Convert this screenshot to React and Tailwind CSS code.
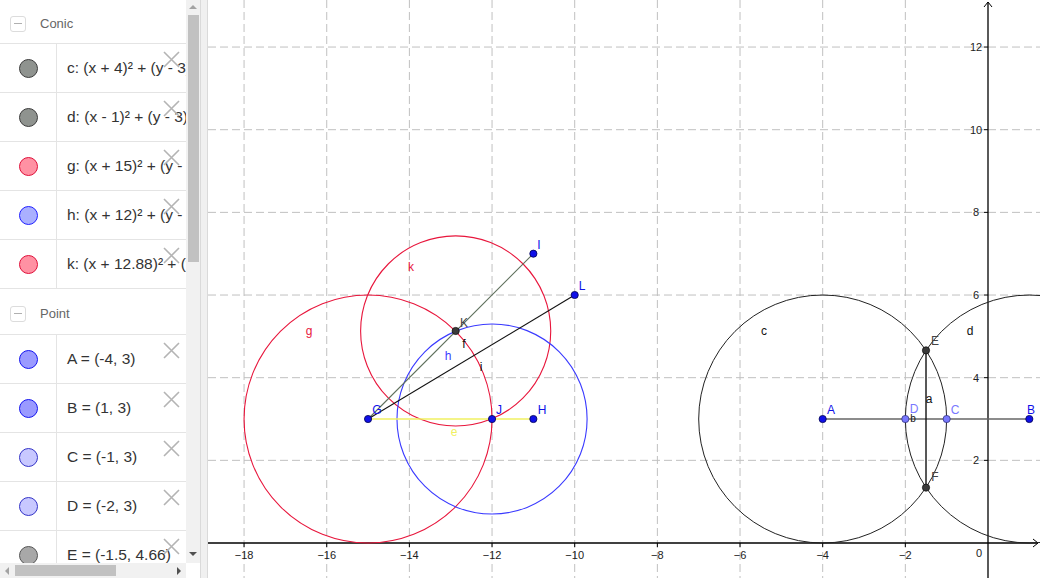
import React from "react";

const S = 41.33;
const OX = 988;
const OY = 543;
const px = (x) => OX + x * S;
const py = (y) => OY - y * S;

const RED = "#e8163c";
const BLUE = "#3a3aff";
const PT_BLUE = "#1010e8";
const PT_LIGHT = "#7878ff";
const PT_DARK = "#3a3a3a";

const conics = [
  { id: "c", text: "c: (x + 4)² + (y - 3)² = 9", fill: "#8f938f", ring: "#3c3c3c" },
  { id: "d", text: "d: (x - 1)² + (y - 3)² = 9", fill: "#8f938f", ring: "#3c3c3c" },
  { id: "g", text: "g: (x + 15)² + (y - 3)² = 9", fill: "#ff91a3", ring: "#e0103a" },
  { id: "h", text: "h: (x + 12)² + (y - 3)² = 5.29", fill: "#aab0ff", ring: "#2020ff" },
  { id: "k", text: "k: (x + 12.88)² + (y - 5.13)² = 5.29", fill: "#ff91a3", ring: "#e0103a" },
];

const points = [
  { id: "A", text: "A = (-4, 3)", fill: "#9a9aff", ring: "#1414f0" },
  { id: "B", text: "B = (1, 3)", fill: "#9a9aff", ring: "#1414f0" },
  { id: "C", text: "C = (-1, 3)", fill: "#c8c8ff", ring: "#3434c8" },
  { id: "D", text: "D = (-2, 3)", fill: "#c8c8ff", ring: "#3434c8" },
  { id: "E", text: "E = (-1.5, 4.66)", fill: "#a8a8a8", ring: "#555555" },
];

function Header({ title, tall }) {
  return (
    <div className={`flex items-center gap-[14px] border-b border-[#e4e4e4] pl-[10px] pt-[4px] ${tall ? "h-[46px]" : "h-[44px]"}`}>
      <div className="flex h-[16px] w-[16px] items-center justify-center rounded-[3px] border border-[#dcdcdc] bg-white">
        <div className="h-[1.5px] w-[8px] bg-[#b0b0b0]" />
      </div>
      <span className="text-[13px] text-[#666]">{title}</span>
    </div>
  );
}

function CloseX() {
  return (
    <svg className="absolute left-[163px] top-[7px]" width="17" height="17" viewBox="0 0 17 17">
      <path d="M1 1 L16 16 M16 1 L1 16" stroke="#b4b4b4" strokeWidth="1.6" />
    </svg>
  );
}

function Row({ item }) {
  return (
    <div className="relative flex h-[49px] border-b border-[#e4e4e4]">
      <div className="flex w-[57px] shrink-0 items-center justify-center border-r border-[#e4e4e4]">
        <div
          className="h-[19px] w-[19px] rounded-full border"
          style={{ backgroundColor: item.fill, borderColor: item.ring }}
        />
      </div>
      <div className="flex items-center overflow-hidden whitespace-nowrap pl-[10px] text-[15.5px] text-[#333]">
        {item.text}
      </div>
      <CloseX />
    </div>
  );
}

function AlgebraPanel() {
  return (
    <div className="flex h-full w-[200px] shrink-0 flex-col bg-white">
      <div className="flex min-h-0 flex-1">
        <div className="w-[186px] overflow-hidden">
          <Header title="Conic" />
          {conics.map((c) => (
            <Row key={c.id} item={c} />
          ))}
          <Header title="Point" tall />
          {points.map((p) => (
            <Row key={p.id} item={p} />
          ))}
        </div>
        <div className="flex w-[14px] flex-col items-center bg-[#f1f1f1]">
          <div className="mt-[5px] h-0 w-0 border-x-[4px] border-b-[4px] border-x-transparent border-b-[#a3a3a3]" />
          <div className="mt-[6px] h-[247px] w-[11px] bg-[#c1c1c1]" />
          <div className="flex-1" />
          <div className="mb-[7px] h-0 w-0 border-x-[4px] border-t-[4px] border-x-transparent border-t-[#505050]" />
        </div>
      </div>
      <div className="flex h-[15px] items-center">
        <div className="flex h-full w-[186px] items-center bg-[#f1f1f1]">
          <div className="ml-[5px] h-0 w-0 border-y-[4px] border-r-[4px] border-y-transparent border-r-[#a3a3a3]" />
          <div className="ml-[6px] h-[11px] w-[101px] bg-[#c1c1c1]" />
          <div className="flex-1" />
          <div className="mr-[5px] h-0 w-0 border-y-[4px] border-l-[4px] border-y-transparent border-l-[#505050]" />
        </div>
        <div className="h-full flex-1 bg-white" />
      </div>
    </div>
  );
}

function Pt({ x, y, fill, stroke = "#000050" }) {
  return <circle cx={px(x)} cy={py(y)} r="3.6" fill={fill} stroke={stroke} strokeWidth="0.8" />;
}

function Label({ x, y, color = "#111", children, size = 12 }) {
  return (
    <text x={x} y={y} fill={color} fontSize={size} textAnchor="middle" dominantBaseline="central">
      {children}
    </text>
  );
}

function Graphics() {
  const gridX = [-20, -18, -16, -14, -12, -10, -8, -6, -4, -2, 2];
  const gridY = [2, 4, 6, 8, 10, 12, 14];
  const xLabels = [-18, -16, -14, -12, -10, -8, -6, -4, -2];
  const yLabels = [2, 4, 6, 8, 10, 12];

  return (
    <div className="h-full flex-1 overflow-hidden bg-white">
      <svg width="832" height="578" viewBox="208 0 832 578" style={{ fontFamily: '"Liberation Sans", Arial, sans-serif' }}>
        {gridX.map((v) => (
          <line key={`gx${v}`} x1={px(v)} y1="0" x2={px(v)} y2="578" stroke="#c0c0c0" strokeDasharray="8 4" />
        ))}
        {gridY.map((v) => (
          <line key={`gy${v}`} x1="208" y1={py(v)} x2="1040" y2={py(v)} stroke="#c0c0c0" strokeDasharray="8 4" />
        ))}

        {/* axes */}
        <line x1="208" y1={OY} x2="1038" y2={OY} stroke="#000" strokeWidth="1.3" />
        <path d={`M1033 ${OY - 4} L1038 ${OY} L1033 ${OY + 4}`} fill="none" stroke="#000" strokeWidth="1" />
        <line x1={OX} y1="2" x2={OX} y2="578" stroke="#000" strokeWidth="1.3" />
        <path d={`M${OX - 4} 7 L${OX} 2 L${OX + 4} 7`} fill="none" stroke="#000" strokeWidth="1" />

        {xLabels.map((v) => (
          <g key={`xl${v}`}>
            <line x1={px(v)} y1={OY} x2={px(v)} y2={OY + 4} stroke="#000" />
            <Label x={px(v)} y={555} color="#222" size={11}>
              {`\u2212${Math.abs(v)}`}
            </Label>
          </g>
        ))}
        <Label x={979} y={553} color="#222" size={11}>0</Label>
        {yLabels.map((v) => (
          <g key={`yl${v}`}>
            <line x1={OX - 4} y1={py(v)} x2={OX} y2={py(v)} stroke="#000" />
            <Label x={976} y={py(v)} color="#222" size={11}>
              {v}
            </Label>
          </g>
        ))}

        {/* left construction */}
        <circle cx={px(-15)} cy={py(3)} r={3 * S} fill="none" stroke={RED} strokeWidth="1.1" />
        <circle cx={px(-12.88)} cy={py(5.13)} r={2.3 * S} fill="none" stroke={RED} strokeWidth="1.1" />
        <circle cx={px(-12)} cy={py(3)} r={2.3 * S} fill="none" stroke={BLUE} strokeWidth="1.1" />
        <line x1={px(-15)} y1={py(3)} x2={px(-11)} y2={py(3)} stroke="#f0f060" strokeWidth="1.3" />
        <line x1={px(-15)} y1={py(3)} x2={px(-11)} y2={py(7)} stroke="#5f705c" strokeWidth="1.1" />
        <line x1={px(-15)} y1={py(3)} x2={px(-10)} y2={py(6)} stroke="#111" strokeWidth="1.1" />

        <Pt x={-15} y={3} fill={PT_BLUE} />
        <Pt x={-12} y={3} fill={PT_BLUE} />
        <Pt x={-11} y={3} fill={PT_BLUE} />
        <Pt x={-11} y={7} fill={PT_BLUE} />
        <Pt x={-10} y={6} fill={PT_BLUE} />
        <Pt x={-12.88} y={5.13} fill={PT_DARK} stroke="#111" />

        <Label x={539} y={245} color={PT_BLUE}>I</Label>
        <Label x={582} y={286} color={PT_BLUE}>L</Label>
        <Label x={464} y={323} color="#444">K</Label>
        <Label x={464} y={344}>f</Label>
        <Label x={448} y={356} color={BLUE}>h</Label>
        <Label x={481} y={367}>i</Label>
        <Label x={377} y={410} color={PT_BLUE}>G</Label>
        <Label x={499} y={410} color={PT_BLUE}>J</Label>
        <Label x={542} y={410} color={PT_BLUE}>H</Label>
        <Label x={454} y={432} color="#f0f060">e</Label>
        <Label x={411} y={267} color={RED}>k</Label>
        <Label x={309} y={331} color={RED}>g</Label>

        {/* right construction */}
        <circle cx={px(-4)} cy={py(3)} r={3 * S} fill="none" stroke="#222" strokeWidth="1" />
        <circle cx={px(1)} cy={py(3)} r={3 * S} fill="none" stroke="#222" strokeWidth="1" />
        <line x1={px(-4)} y1={py(3)} x2={px(1)} y2={py(3)} stroke="#666" strokeWidth="1.6" />
        <line x1={px(-1.5)} y1={py(4.66)} x2={px(-1.5)} y2={py(1.34)} stroke="#111" strokeWidth="1.4" />

        <Pt x={-4} y={3} fill={PT_BLUE} />
        <Pt x={1} y={3} fill={PT_BLUE} />
        <Pt x={-1} y={3} fill={PT_LIGHT} stroke="#333380" />
        <Pt x={-2} y={3} fill={PT_LIGHT} stroke="#333380" />
        <Pt x={-1.5} y={4.66} fill={PT_DARK} stroke="#111" />
        <Pt x={-1.5} y={1.34} fill={PT_DARK} stroke="#111" />

        <Label x={831} y={410} color={PT_BLUE}>A</Label>
        <Label x={1031} y={410} color={PT_BLUE}>B</Label>
        <Label x={955} y={410} color={PT_LIGHT}>C</Label>
        <Label x={914} y={409} color={PT_LIGHT}>D</Label>
        <Label x={913} y={418} size={10}>b</Label>
        <Label x={935} y={341} color="#444">E</Label>
        <Label x={935} y={477} color="#444">F</Label>
        <Label x={929} y={399}>a</Label>
        <Label x={764} y={331}>c</Label>
        <Label x={970} y={331}>d</Label>
      </svg>
    </div>
  );
}

export default function App() {
  return (
    <div
      className="flex h-[578px] w-[1040px] overflow-hidden bg-white"
      style={{ fontFamily: '"Liberation Sans", Arial, sans-serif' }}
    >
      <AlgebraPanel />
      <div className="h-full w-[8px] shrink-0 border-l border-r border-[#dadada] bg-[#f0f0f0]" />
      <Graphics />
    </div>
  );
}
